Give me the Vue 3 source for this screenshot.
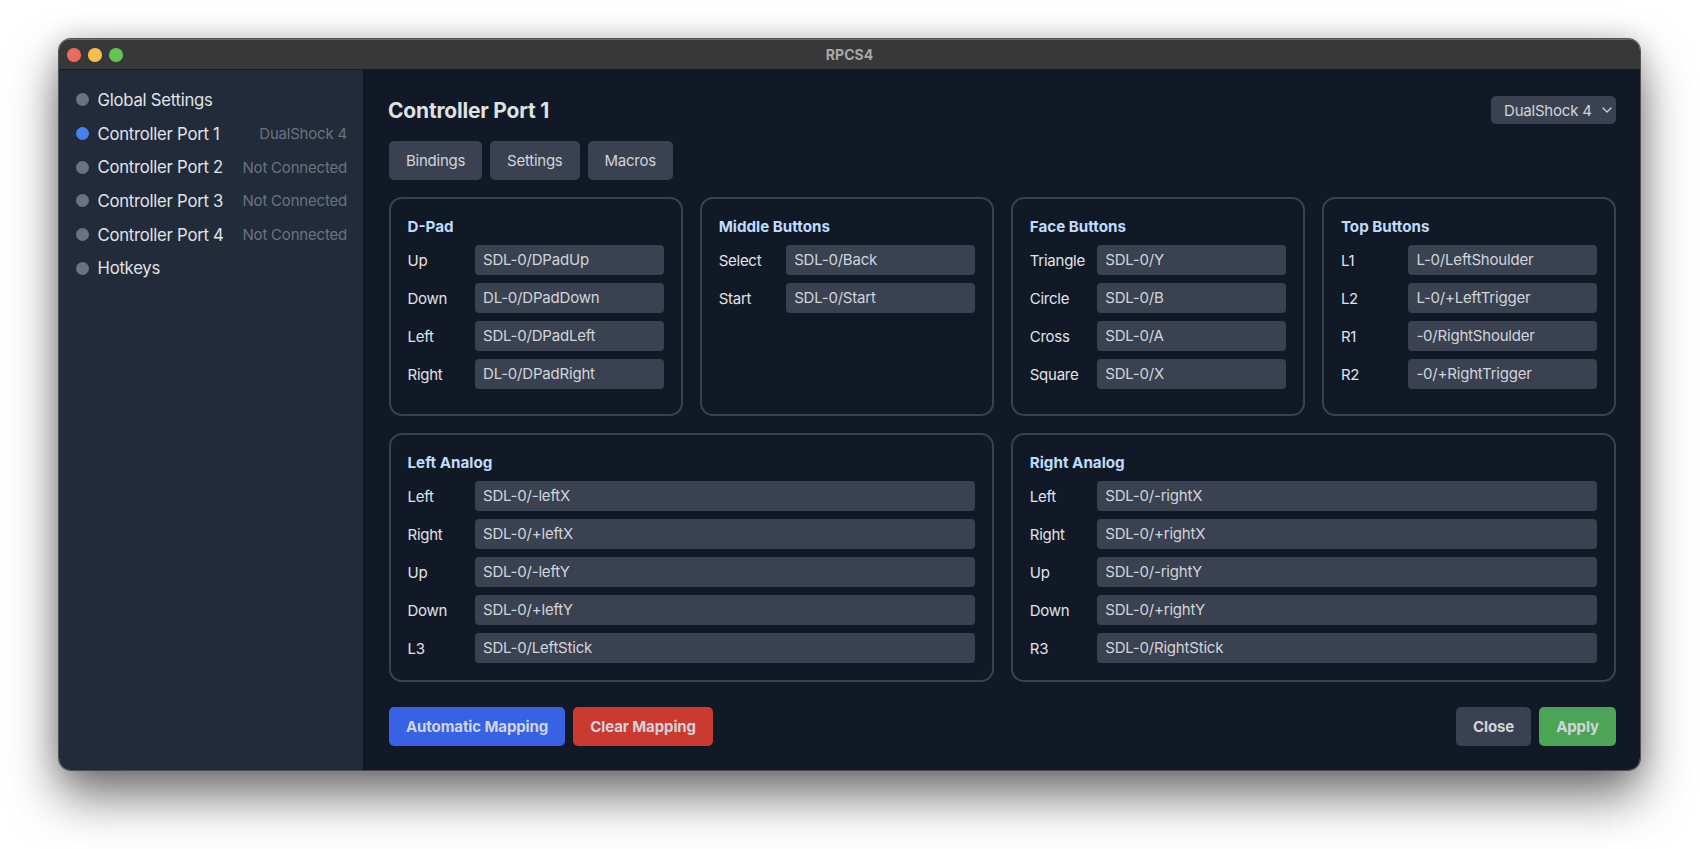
<template>
  <div class="page">
    <div class="window">
      <div class="titlebar">
        <div class="lights">
          <span class="light red"></span>
          <span class="light yellow"></span>
          <span class="light green"></span>
        </div>
        <span class="app-title">RPCS4</span>
      </div>

      <div class="body">
        <aside class="sidebar">
          <div v-for="item in sidebarItems" :key="item.name" class="side-item">
            <span class="dot" :class="{ active: item.active }"></span>
            <span class="side-name">{{ item.name }}</span>
            <span class="side-status">{{ item.status }}</span>
          </div>
        </aside>

        <main class="main">
          <header class="header">
            <h1 class="title">Controller Port 1</h1>
            <div class="select">
              <span>DualShock 4</span>
              <svg class="chevron" width="10" height="6" viewBox="0 0 10 6">
                <path d="M1 1l4 4 4-4" fill="none" stroke="#d1d5db" stroke-width="1.2" stroke-linecap="round" stroke-linejoin="round" />
              </svg>
            </div>
          </header>

          <nav class="tabs">
            <button v-for="tab in tabs" :key="tab" class="tab">{{ tab }}</button>
          </nav>

          <section class="grid-top">
            <div v-for="group in topGroups" :key="group.title" class="panel">
              <h2 class="panel-title">{{ group.title }}</h2>
              <div v-for="row in group.rows" :key="row[0]" class="row">
                <span class="row-label">{{ row[0] }}</span>
                <div class="binding">{{ row[1] }}</div>
              </div>
            </div>
          </section>

          <section class="grid-bottom">
            <div v-for="group in analogGroups" :key="group.title" class="panel">
              <h2 class="panel-title">{{ group.title }}</h2>
              <div v-for="row in group.rows" :key="row[0]" class="row">
                <span class="row-label">{{ row[0] }}</span>
                <div class="binding">{{ row[1] }}</div>
              </div>
            </div>
          </section>

          <footer class="footer">
            <div class="footer-side">
              <button class="action blue">Automatic Mapping</button>
              <button class="action red-btn">Clear Mapping</button>
            </div>
            <div class="footer-side">
              <button class="action gray">Close</button>
              <button class="action green-btn">Apply</button>
            </div>
          </footer>
        </main>
      </div>
    </div>
  </div>
</template>

<script setup>
const sidebarItems = [
  { name: 'Global Settings', status: '' },
  { name: 'Controller Port 1', status: 'DualShock 4', active: true },
  { name: 'Controller Port 2', status: 'Not Connected' },
  { name: 'Controller Port 3', status: 'Not Connected' },
  { name: 'Controller Port 4', status: 'Not Connected' },
  { name: 'Hotkeys', status: '' },
]

const tabs = ['Bindings', 'Settings', 'Macros']

const topGroups = [
  {
    title: 'D-Pad',
    rows: [['Up', 'SDL-0/DPadUp'], ['Down', 'DL-0/DPadDown'], ['Left', 'SDL-0/DPadLeft'], ['Right', 'DL-0/DPadRight']],
  },
  {
    title: 'Middle Buttons',
    rows: [['Select', 'SDL-0/Back'], ['Start', 'SDL-0/Start']],
  },
  {
    title: 'Face Buttons',
    rows: [['Triangle', 'SDL-0/Y'], ['Circle', 'SDL-0/B'], ['Cross', 'SDL-0/A'], ['Square', 'SDL-0/X']],
  },
  {
    title: 'Top Buttons',
    rows: [['L1', 'L-0/LeftShoulder'], ['L2', 'L-0/+LeftTrigger'], ['R1', '-0/RightShoulder'], ['R2', '-0/+RightTrigger']],
  },
]

const analogGroups = [
  {
    title: 'Left Analog',
    rows: [['Left', 'SDL-0/-leftX'], ['Right', 'SDL-0/+leftX'], ['Up', 'SDL-0/-leftY'], ['Down', 'SDL-0/+leftY'], ['L3', 'SDL-0/LeftStick']],
  },
  {
    title: 'Right Analog',
    rows: [['Left', 'SDL-0/-rightX'], ['Right', 'SDL-0/+rightX'], ['Up', 'SDL-0/-rightY'], ['Down', 'SDL-0/+rightY'], ['R3', 'SDL-0/RightStick']],
  },
]
</script>

<style>
html,
body {
  margin: 0;
  background: #fff;
}
</style>

<style scoped>
.page {
  height: 849px;
  box-sizing: border-box;
  padding: 39px 60px 0 59px;
  overflow: hidden;
  font-family: Inter, "Liberation Sans", sans-serif;
}

.window {
  height: 731px;
  border-radius: 12px;
  overflow: hidden;
  display: flex;
  flex-direction: column;
  box-shadow: 0 0 0 1px rgba(70, 70, 70, 0.9), 0 26px 50px rgba(0, 0, 0, 0.55), 0 0 28px rgba(0, 0, 0, 0.18);
}

.titlebar {
  height: 31px;
  flex: none;
  background: #383838;
  border-top: 1px solid #6a6a6a;
  box-sizing: border-box;
  border-bottom: 1px solid #1c1c1c;
  display: flex;
  align-items: center;
  justify-content: center;
  position: relative;
}

.lights {
  position: absolute;
  left: 8px;
  top: 8px;
  display: flex;
  gap: 7.5px;
}

.light {
  width: 13.5px;
  height: 13.5px;
  border-radius: 50%;
}

.red { background: #ec6a5e; }
.yellow { background: #f4bf4f; }
.green { background: #61c554; }

.app-title {
  font-size: 14px;
  font-weight: 700;
  color: #a8a8a8;
}

.body {
  flex: 1;
  display: flex;
  min-height: 0;
}

.sidebar {
  width: 304px;
  flex: none;
  box-sizing: border-box;
  background: #222b39;
  padding: 13px 16px 13px 17px;
}

.side-item {
  height: 33.7px;
  display: flex;
  align-items: center;
}

.dot {
  width: 13px;
  height: 13px;
  border-radius: 50%;
  background: #6b7280;
  margin-right: 8.5px;
  flex: none;
}

.dot.active { background: #4a7ff0; }

.side-name {
  font-size: 16.7px;
  letter-spacing: -0.25px;
  color: #e0e3e8;
  white-space: nowrap;
}

.side-status {
  margin-left: auto;
  font-size: 15px;
  letter-spacing: -0.2px;
  color: #6b7280;
  white-space: nowrap;
}

.main {
  flex: 1;
  min-width: 0;
  background: #121926;
  padding: 25px 24px 25px 26px;
  display: flex;
  flex-direction: column;
}

.header {
  display: flex;
  justify-content: space-between;
  align-items: center;
  height: 28px;
  margin-top: 1px;
}

.title {
  margin: 0 0 0 -1px;
  font-size: 21px;
  letter-spacing: -0.2px;
  font-weight: 700;
  color: #dfe1e5;
}

.select {
  width: 125px;
  height: 28px;
  box-sizing: border-box;
  padding: 0 4px 0 13px;
  background: #3a4150;
  border-radius: 5px;
  font-size: 15px;
  letter-spacing: -0.2px;
  color: #d1d5db;
  display: flex;
  align-items: center;
  justify-content: space-between;
}

.tabs {
  display: flex;
  gap: 8px;
  margin-top: 17px;
}

.tab {
  height: 39px;
  padding: 0 17px;
  border: 0;
  border-radius: 5px;
  background: #3a4150;
  color: #d1d5db;
  font: 400 15px Inter, "Liberation Sans", sans-serif;
  letter-spacing: -0.25px;
}

.grid-top {
  display: grid;
  grid-template-columns: repeat(4, 1fr);
  gap: 17.5px;
  margin-top: 17px;
}

.grid-bottom {
  display: grid;
  grid-template-columns: repeat(2, 1fr);
  gap: 17.5px;
  margin-top: 17px;
}

.panel {
  border: 2px solid #3a4150;
  border-radius: 13px;
  padding: 17px 17px 17px 16.5px;
  box-sizing: border-box;
  min-width: 0;
}

.grid-top .panel { height: 219px; }
.grid-bottom .panel { height: 249px; }

.panel-title {
  margin: 0 0 8px;
  height: 21px;
  line-height: 21px;
  font-size: 15.2px;
  font-weight: 700;
  color: #bfdbfe;
}

.row {
  display: flex;
  align-items: center;
  height: 30px;
  margin-bottom: 8px;
}

.row-label {
  width: 67.5px;
  flex: none;
  font-size: 15px;
  letter-spacing: -0.25px;
  color: #e0e3e8;
}

.binding {
  flex: 1;
  height: 30px;
  line-height: 30px;
  box-sizing: border-box;
  padding: 0 8px;
  background: #3a4150;
  border-radius: 4px;
  font-size: 15px;
  letter-spacing: -0.2px;
  color: #d1d5db;
}

.footer {
  display: flex;
  justify-content: space-between;
  margin-top: 25px;
}

.footer-side {
  display: flex;
  gap: 8px;
}

.action {
  height: 39px;
  padding: 0 17px;
  border: 0;
  border-radius: 5px;
  font: 700 15px Inter, "Liberation Sans", sans-serif;
  letter-spacing: -0.1px;
  color: #d1d5db;
}

.blue { background: #3662e3; }
.red-btn { background: #cb3a31; }
.gray { background: #3a4150; }
.green-btn { background: #4ca456; }
</style>
